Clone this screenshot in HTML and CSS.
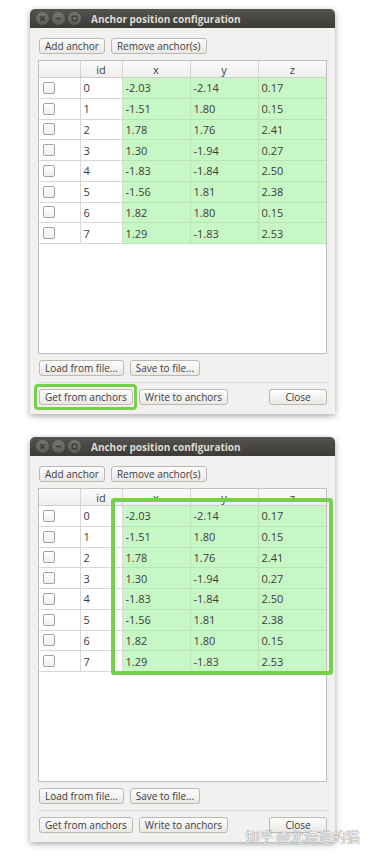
FILE: index.html
```html
<!DOCTYPE html>
<html lang="en">
<head>
  <meta charset="UTF-8">
  <meta name="viewport" content="width=device-width, initial-scale=1.0">
  <title>Anchor position configuration</title>
  <link rel="stylesheet" href="styles.css">
</head>
<body>
  <div class="page">

    <!-- first dialog: "Get from anchors" highlighted -->
    <div class="window">
      <div class="titlebar">
        <div class="wm-buttons">
          <span class="wm-btn"><svg width="13" height="13" viewBox="0 0 13 13"><path d="M4.3 4.3l4.4 4.4M8.7 4.3l-4.4 4.4" stroke="#3a3935" stroke-width="1.4" fill="none"/></svg></span>
          <span class="wm-btn"><svg width="13" height="13" viewBox="0 0 13 13"><path d="M4 6.5h5" stroke="#3a3935" stroke-width="1.4" fill="none"/></svg></span>
          <span class="wm-btn"><svg width="13" height="13" viewBox="0 0 13 13"><rect x="4.2" y="4.2" width="4.6" height="4.6" stroke="#3a3935" stroke-width="1.2" fill="none"/></svg></span>
        </div>
        <div class="title">Anchor position configuration</div>
      </div>
      <div class="content">
        <div class="btn-row">
          <button class="btn">Add anchor</button>
          <button class="btn">Remove anchor(s)</button>
        </div>
        <div class="table-box">
          <table class="anchors">
            <colgroup><col class="c-check"><col class="c-id"><col class="c-num"><col class="c-num"><col></colgroup>
            <thead>
              <tr><th></th><th>id</th><th>x</th><th>y</th><th>z</th></tr>
            </thead>
            <tbody>
              <tr><td><span class="check"></span></td><td>0</td><td class="pos">-2.03</td><td class="pos">-2.14</td><td class="pos">0.17</td></tr>
              <tr><td><span class="check"></span></td><td>1</td><td class="pos">-1.51</td><td class="pos">1.80</td><td class="pos">0.15</td></tr>
              <tr><td><span class="check"></span></td><td>2</td><td class="pos">1.78</td><td class="pos">1.76</td><td class="pos">2.41</td></tr>
              <tr><td><span class="check"></span></td><td>3</td><td class="pos">1.30</td><td class="pos">-1.94</td><td class="pos">0.27</td></tr>
              <tr><td><span class="check"></span></td><td>4</td><td class="pos">-1.83</td><td class="pos">-1.84</td><td class="pos">2.50</td></tr>
              <tr><td><span class="check"></span></td><td>5</td><td class="pos">-1.56</td><td class="pos">1.81</td><td class="pos">2.38</td></tr>
              <tr><td><span class="check"></span></td><td>6</td><td class="pos">1.82</td><td class="pos">1.80</td><td class="pos">0.15</td></tr>
              <tr><td><span class="check"></span></td><td>7</td><td class="pos">1.29</td><td class="pos">-1.83</td><td class="pos">2.53</td></tr>
            </tbody>
          </table>
        </div>
        <div class="btn-row">
          <button class="btn">Load from file...</button>
          <button class="btn">Save to file...</button>
        </div>
        <div class="separator"></div>
        <div class="btn-row">
          <button class="btn marked">Get from anchors</button>
          <button class="btn">Write to anchors</button>
          <button class="btn btn-close">Close</button>
        </div>
      </div>
    </div>

    <!-- second dialog: position columns highlighted -->
    <div class="window">
      <div class="titlebar">
        <div class="wm-buttons">
          <span class="wm-btn"><svg width="13" height="13" viewBox="0 0 13 13"><path d="M4.3 4.3l4.4 4.4M8.7 4.3l-4.4 4.4" stroke="#3a3935" stroke-width="1.4" fill="none"/></svg></span>
          <span class="wm-btn"><svg width="13" height="13" viewBox="0 0 13 13"><path d="M4 6.5h5" stroke="#3a3935" stroke-width="1.4" fill="none"/></svg></span>
          <span class="wm-btn"><svg width="13" height="13" viewBox="0 0 13 13"><rect x="4.2" y="4.2" width="4.6" height="4.6" stroke="#3a3935" stroke-width="1.2" fill="none"/></svg></span>
        </div>
        <div class="title">Anchor position configuration</div>
      </div>
      <div class="content">
        <div class="btn-row">
          <button class="btn">Add anchor</button>
          <button class="btn">Remove anchor(s)</button>
        </div>
        <div class="table-box">
          <table class="anchors">
            <colgroup><col class="c-check"><col class="c-id"><col class="c-num"><col class="c-num"><col></colgroup>
            <thead>
              <tr><th></th><th>id</th><th>x</th><th>y</th><th>z</th></tr>
            </thead>
            <tbody>
              <tr><td><span class="check"></span></td><td>0</td><td class="pos">-2.03</td><td class="pos">-2.14</td><td class="pos">0.17</td></tr>
              <tr><td><span class="check"></span></td><td>1</td><td class="pos">-1.51</td><td class="pos">1.80</td><td class="pos">0.15</td></tr>
              <tr><td><span class="check"></span></td><td>2</td><td class="pos">1.78</td><td class="pos">1.76</td><td class="pos">2.41</td></tr>
              <tr><td><span class="check"></span></td><td>3</td><td class="pos">1.30</td><td class="pos">-1.94</td><td class="pos">0.27</td></tr>
              <tr><td><span class="check"></span></td><td>4</td><td class="pos">-1.83</td><td class="pos">-1.84</td><td class="pos">2.50</td></tr>
              <tr><td><span class="check"></span></td><td>5</td><td class="pos">-1.56</td><td class="pos">1.81</td><td class="pos">2.38</td></tr>
              <tr><td><span class="check"></span></td><td>6</td><td class="pos">1.82</td><td class="pos">1.80</td><td class="pos">0.15</td></tr>
              <tr><td><span class="check"></span></td><td>7</td><td class="pos">1.29</td><td class="pos">-1.83</td><td class="pos">2.53</td></tr>
            </tbody>
          </table>
          <div class="column-mark"></div>
        </div>
        <div class="btn-row">
          <button class="btn">Load from file...</button>
          <button class="btn">Save to file...</button>
        </div>
        <div class="separator"></div>
        <div class="btn-row">
          <button class="btn">Get from anchors</button>
          <button class="btn">Write to anchors</button>
          <button class="btn btn-close">Close</button>
        </div>
      </div>
    </div>

    <div class="watermark">知乎 @北海道的猫</div>
  </div>
</body>
</html>
```

FILE: styles.css
```css
body {
  margin: 0;
  background: #fff;
  font-family: "Open Sans", "DejaVu Sans", sans-serif;
  font-size: 11px;
  color: #3c3c3c;
}
.page {
  position: relative;
  width: 371px;
  height: 857px;
  padding-top: 9px;
  box-sizing: border-box;
}
.window {
  width: 305px;
  margin-left: 30px;
  margin-bottom: 23px;
  border-radius: 5px 5px 0 0;
  background: #f2f1f0;
  box-shadow: 0 2px 6px rgba(0, 0, 0, 0.35);
}
.titlebar {
  height: 19px;
  display: flex;
  align-items: center;
  padding-left: 6px;
  border-radius: 5px 5px 0 0;
  background: linear-gradient(#54534f, #3c3b37);
}
.wm-buttons {
  display: flex;
  gap: 3px;
}
.wm-btn {
  width: 13px;
  height: 13px;
  border-radius: 50%;
  background: linear-gradient(#77766f, #5c5b56);
  display: flex;
}
.title {
  margin-left: 10px;
  color: #dfdbd2;
  font-weight: bold;
  font-size: 10px;
}
.content {
  padding: 10px 8px 9px 8px;
}
.btn-row {
  display: flex;
  gap: 6px;
  padding-left: 1px;
}
.btn {
  position: relative;
  height: 16px;
  padding: 0 5px;
  font-family: inherit;
  font-size: 10px;
  line-height: 14px;
  color: #3c3c3c;
  border: 1px solid #bcb9b3;
  border-radius: 3px;
  background: linear-gradient(#fdfdfd, #e9e8e6);
}
.btn-close {
  margin-left: auto;
  width: 58px;
}
.marked::after {
  content: "";
  position: absolute;
  top: -6px;
  bottom: -6px;
  left: -6px;
  right: -5px;
  border: 3px solid #77d04c;
  border-radius: 4px;
}
.table-box {
  position: relative;
  height: 294px;
  margin: 6px 0;
  border: 1px solid #c2c0bc;
  background: #fff;
  box-sizing: border-box;
}
.anchors {
  width: 100%;
  table-layout: fixed;
  border-collapse: collapse;
}
.c-check { width: 41px; }
.c-id { width: 42px; }
.c-num { width: 68px; }
.anchors th {
  height: 16px;
  padding: 0;
  font-weight: normal;
  text-align: center;
  border-right: 1px solid #d6d5d2;
  border-bottom: 1px solid #cfcecb;
  background: linear-gradient(#fbfbfb, #efeeed);
}
.anchors td {
  height: 19.75px;
  padding: 0 0 0 3px;
  border-right: 1px solid #d8d8d8;
  border-bottom: 1px solid #d8d8d8;
}
.anchors td.pos {
  background: #c8f7c6;
  border-color: #b8e4b6;
}
.anchors th:last-child,
.anchors td:last-child {
  border-right: none;
}
.check {
  display: block;
  width: 10px;
  height: 10px;
  margin-left: 1px;
  border: 1px solid #a3a19c;
  border-radius: 2px;
  background: linear-gradient(#fff, #f0f0f0);
}
.column-mark {
  position: absolute;
  left: 72px;
  top: 9px;
  width: 222px;
  height: 177px;
  border: 4px solid #77d04c;
  border-radius: 3px;
  box-sizing: border-box;
}
.separator {
  height: 1px;
  margin: 6px 0 6px;
  background: #dcdad5;
}
.watermark {
  position: absolute;
  right: 11px;
  top: 826px;
  font-family: "Noto Sans CJK SC", sans-serif;
  font-size: 14px;
  color: rgba(255, 255, 255, 0.85);
  text-shadow: 0 0 1px #8a8a8a, 0 0 1px #8a8a8a;
}
```
